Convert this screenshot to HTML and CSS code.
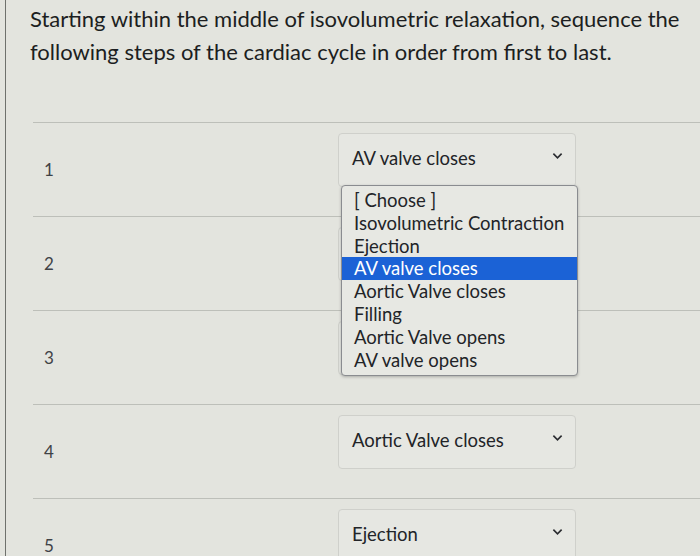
FILE: index.html
```html
<!DOCTYPE html>
<html>
<head>
<meta charset="utf-8">
<link rel="stylesheet" href="styles.css">
</head>
<body>
<div class="page">
  <p class="question">Starting within the middle of isovolumetric relaxation, sequence the following steps of the cardiac cycle in order from first to last.</p>
  <div class="rows">
    <div class="row">
      <span class="num">1</span>
      <div class="cell">
        <div class="select"><span>AV valve closes</span><svg class="chev" viewBox="0 0 12 8"><path d="M1.5 1.5 L6 6 L10.5 1.5" /></svg></div>
        <ul class="listbox">
          <li>[ Choose ]</li>
          <li>Isovolumetric Contraction</li>
          <li>Ejection</li>
          <li class="sel">AV valve closes</li>
          <li>Aortic Valve closes</li>
          <li>Filling</li>
          <li>Aortic Valve opens</li>
          <li>AV valve opens</li>
        </ul>
      </div>
    </div>
    <div class="row">
      <span class="num">2</span>
      <div class="cell">
        <div class="select"><span></span><svg class="chev" viewBox="0 0 12 8"><path d="M1.5 1.5 L6 6 L10.5 1.5" /></svg></div>
      </div>
    </div>
    <div class="row">
      <span class="num">3</span>
      <div class="cell">
        <div class="select"><span></span><svg class="chev" viewBox="0 0 12 8"><path d="M1.5 1.5 L6 6 L10.5 1.5" /></svg></div>
      </div>
    </div>
    <div class="row">
      <span class="num">4</span>
      <div class="cell">
        <div class="select"><span>Aortic Valve closes</span><svg class="chev" viewBox="0 0 12 8"><path d="M1.5 1.5 L6 6 L10.5 1.5" /></svg></div>
      </div>
    </div>
    <div class="row">
      <span class="num">5</span>
      <div class="cell">
        <div class="select"><span>Ejection</span><svg class="chev" viewBox="0 0 12 8"><path d="M1.5 1.5 L6 6 L10.5 1.5" /></svg></div>
      </div>
    </div>
  </div>
</div>
</body>
</html>
```

FILE: styles.css
```css
html, body {
  margin: 0;
  padding: 0;
  background: #e3e4de;
  height: 556px;
  overflow: hidden;
}
.page {
  margin-left: 5px;
  border-left: 1px solid #6f716c;
  height: 556px;
  overflow: hidden;
  font-family: Lato, "Open Sans", sans-serif;
  color: #24262a;
}
.question {
  margin: 0;
  padding: 2px 10px 0 24px;
  font-size: 22px;
  line-height: 33px;
  color: #1c1e21;
}
.rows {
  margin-top: 54px;
  margin-left: 27px;
}
.row {
  position: relative;
  height: 93px;
  border-top: 1px solid #bdbfb9;
  display: flex;
}
.num {
  width: 294px;
  padding-left: 11px;
  align-self: center;
  font-size: 17px;
  color: #404246;
}
.cell {
  position: relative;
  padding-top: 10px;
}
.select {
  box-sizing: border-box;
  width: 238px;
  height: 54px;
  border: 1px solid #cfd0cb;
  border-radius: 4px;
  background: #e6e7e2;
  display: flex;
  align-items: center;
  justify-content: space-between;
  padding: 0 12px 4px 13px;
  font-size: 18.5px;
  color: #222428;
}
.chev {
  width: 11px;
  height: 8px;
  fill: none;
  stroke: #2a2c30;
  stroke-width: 1.8;
  margin-bottom: 4px;
}
.listbox {
  position: absolute;
  z-index: 5;
  top: 62px;
  left: 3px;
  width: 237px;
  box-sizing: border-box;
  margin: 0;
  padding: 3px 0 4px;
  list-style: none;
  background: #e7e8e3;
  border: 1px solid #8a8c90;
  border-radius: 4px;
  box-shadow: 0 1px 3px rgba(0,0,0,0.25);
  font-size: 18.5px;
  color: #222428;
}
.listbox li {
  height: 22.8px;
  line-height: 22px;
  padding-left: 12px;
  white-space: nowrap;
}
.listbox li.sel {
  background: #1b62d6;
  color: #ffffff;
}
```
